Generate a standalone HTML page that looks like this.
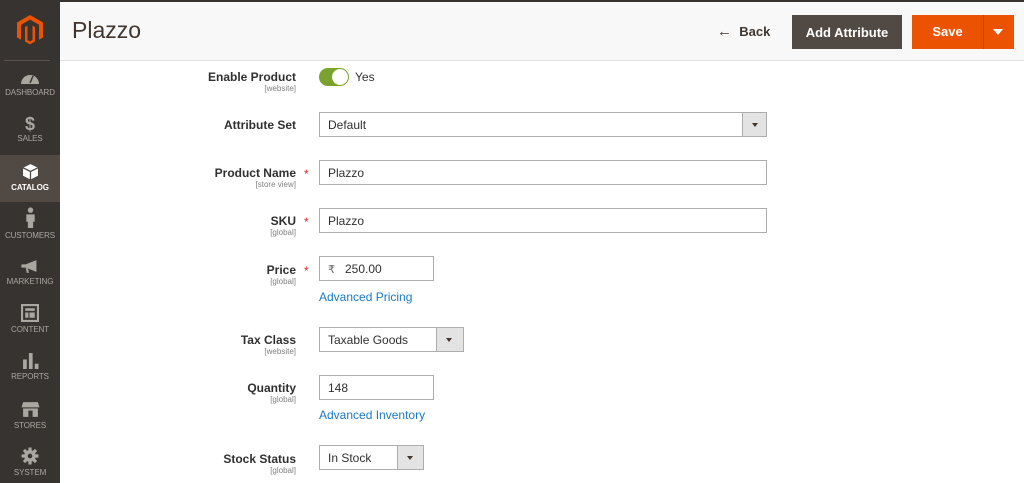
<!DOCTYPE html>
<html><head><meta charset="utf-8"><style>
*{margin:0;padding:0;box-sizing:border-box}
body{width:1024px;height:483px;overflow:hidden;background:#fff;font-family:"Liberation Sans",sans-serif;position:relative;color:#303030}
.a{position:absolute}
#topbar{left:0;top:0;width:1024px;height:2px;background:#373330}
#side{left:0;top:0;width:60px;height:483px;background:#373330}
.nav{position:absolute;left:0;width:60px;text-align:center;font-size:8px;color:#aaa6a0;letter-spacing:-0.1px}
.nav svg{display:block;margin:0 auto 3px}
#hdr{left:60px;top:2px;width:964px;height:59px;background:#f8f8f8;border-bottom:1px solid #e3e3e3}
.lbl{position:absolute;right:728px;text-align:right;font-size:12px;font-weight:bold;color:#303030;line-height:14px}
.lbl small{display:block;font-size:8px;font-weight:normal;color:#808080;line-height:10px}
.star{position:absolute;left:304px;color:#e22626;font-size:12px}
.inp{position:absolute;left:319px;height:25px;border:1px solid #adadad;background:#fff;font-size:12px;padding-left:8px;line-height:24px;color:#303030}
.arr{position:absolute;right:0;top:0;width:24px;height:23px;background:#e3e3e3;border-left:1px solid #adadad}
.arr:after{content:"";position:absolute;left:9px;top:10px;border-left:3px solid transparent;border-right:3px solid transparent;border-top:4px solid #41362f}
.link{position:absolute;left:319px;font-size:12px;color:#1979c3}
</style></head><body>
<div class="a" id="side"></div>
<div class="a" id="topbar"></div>
<svg class="a" style="left:14px;top:14px" width="32" height="32" viewBox="0 0 32 32"><path d="M16 1 L29 8.5 V23.5 L25 25.8 V10.8 L16 5.6 L7 10.8 V25.8 L3 23.5 V8.5 Z" fill="#eb5202"/><path d="M11 13 L13.5 11.6 V26 L16 27.4 L18.5 26 V11.6 L21 13 V27.5 L16 30.4 L11 27.5 Z" fill="#eb5202"/></svg>
<div class="a" style="left:4px;top:60px;width:46px;height:1px;background:#5a524d"></div>
<div class="a" style="left:0;top:155px;width:60px;height:47px;background:#514943"></div>
<div class="nav" style="top:72px"><svg width="20" height="13" viewBox="0 0 20 13"><path d="M1 12 A9 9 0 0 1 19 12 Z" fill="#aaa6a0"/><path d="M10 11 L13 4" stroke="#373330" stroke-width="1.5"/></svg>DASHBOARD</div>
<div class="nav" style="top:115px;"><div style="font-size:18px;font-weight:bold;color:#aaa6a0;line-height:19px">$</div>SALES</div>
<div class="nav" style="top:163px;color:#fff;font-weight:bold"><svg width="17" height="17" viewBox="0 0 16 16"><path d="M8 1 L15 4.5 V12 L8 15.5 L1 12 V4.5 Z" fill="#fff"/><path d="M1 4.5 L8 8 L15 4.5 M8 8 V15.5" stroke="#514943" stroke-width="1.2" fill="none"/></svg>CATALOG</div>
<div class="nav" style="top:207px"><svg width="11" height="21" viewBox="0 0 10 20"><circle cx="5" cy="3" r="2.6" fill="#aaa6a0"/><path d="M1 7 H9 V14 H7.5 V20 H2.5 V14 H1 Z" fill="#aaa6a0"/></svg>CUSTOMERS</div>
<div class="nav" style="top:259px"><svg width="20" height="15" viewBox="0 0 18 14"><path d="M1 5 H5 L15 1 V12 L5 8 H1 Z M5 8 L6 13 H8 L7 8.5Z" fill="#aaa6a0"/></svg>MARKETING</div>
<div class="nav" style="top:304px"><svg width="18" height="18" viewBox="0 0 17 17"><rect x="1" y="1" width="15" height="15" fill="none" stroke="#aaa6a0" stroke-width="2"/><rect x="4" y="4" width="9" height="2.5" fill="#aaa6a0"/><rect x="4" y="8" width="3" height="5" fill="#aaa6a0"/><rect x="8" y="8" width="5" height="5" fill="#aaa6a0"/></svg>CONTENT</div>
<div class="nav" style="top:352px"><svg width="17" height="17" viewBox="0 0 16 16"><rect x="1" y="7" width="3.5" height="9" fill="#aaa6a0"/><rect x="6.5" y="1" width="3.5" height="15" fill="#aaa6a0"/><rect x="12" y="11" width="3.5" height="5" fill="#aaa6a0"/></svg>REPORTS</div>
<div class="nav" style="top:401px"><svg width="19" height="17" viewBox="0 0 18 16"><path d="M2 1 H16 L17.5 6 H0.5 Z" fill="#aaa6a0"/><path d="M2 7 H16 V15 H2 Z" fill="#aaa6a0"/><rect x="7" y="9" width="4" height="6" fill="#373330"/></svg>STORES</div>
<div class="nav" style="top:447px"><svg width="18" height="18" viewBox="0 0 17 17"><circle cx="8.5" cy="8.5" r="5.5" fill="#aaa6a0"/><g stroke="#aaa6a0" stroke-width="3"><path d="M8.5 0.5V16.5M0.5 8.5H16.5M2.8 2.8L14.2 14.2M14.2 2.8L2.8 14.2"/></g><circle cx="8.5" cy="8.5" r="2.2" fill="#373330"/></svg>SYSTEM</div>

<div class="a" id="hdr"></div>
<div class="a" style="left:72px;top:17px;font-size:23px;color:#41362f">Plazzo</div>
<div class="a" style="left:717px;top:23px;font-size:13px;color:#41362f;font-weight:bold"><span style="font-weight:normal;font-size:15px">&#8592;</span>&nbsp; Back</div>
<div class="a" style="left:792px;top:15px;width:110px;height:34px;background:#514943;color:#fff;font-size:13px;font-weight:bold;text-align:center;line-height:33px;border:1px solid #514943">Add Attribute</div>
<div class="a" style="left:912px;top:15px;width:102px;height:34px;background:#eb5202;color:#fff;font-size:13px;font-weight:bold;line-height:33px">
<span style="position:absolute;left:0;width:71px;text-align:center">Save</span>
<span style="position:absolute;left:71px;top:0;width:1px;height:34px;background:#c84602"></span>
<span style="position:absolute;left:81px;top:14px;border-left:5px solid transparent;border-right:5px solid transparent;border-top:6px solid #fff"></span></div>

<div class="lbl" style="top:70px">Enable Product<small>[website]</small></div>
<div class="a" style="left:319px;top:68px;width:30px;height:18px;border-radius:9px;background:#79a22e"></div>
<div class="a" style="left:332px;top:69px;width:16px;height:16px;border-radius:50%;background:#fff"></div>
<div class="a" style="left:355px;top:70px;font-size:12px">Yes</div>

<div class="lbl" style="top:118px">Attribute Set</div>
<div class="inp" style="top:112px;width:448px">Default<span class="arr"></span></div>

<div class="lbl" style="top:166px">Product Name<small>[store view]</small></div><span class="star" style="top:167px">*</span>
<div class="inp" style="top:160px;width:448px">Plazzo</div>

<div class="lbl" style="top:214px">SKU<small>[global]</small></div><span class="star" style="top:215px">*</span>
<div class="inp" style="top:208px;width:448px">Plazzo</div>

<div class="lbl" style="top:263px">Price<small>[global]</small></div><span class="star" style="top:264px">*</span>
<div class="inp" style="top:256px;width:115px"><span style="color:#666;font-size:11px">&#8377;</span>&nbsp;&nbsp; 250.00</div>
<div class="link" style="top:290px">Advanced Pricing</div>

<div class="lbl" style="top:333px">Tax Class<small>[website]</small></div>
<div class="inp" style="top:327px;width:145px">Taxable Goods<span class="arr" style="width:27px"></span></div>

<div class="lbl" style="top:381px">Quantity<small>[global]</small></div>
<div class="inp" style="top:375px;width:115px">148</div>
<div class="link" style="top:408px">Advanced Inventory</div>

<div class="lbl" style="top:452px">Stock Status<small>[global]</small></div>
<div class="inp" style="top:445px;width:105px">In Stock<span class="arr" style="width:26px"></span></div>
</body></html>
